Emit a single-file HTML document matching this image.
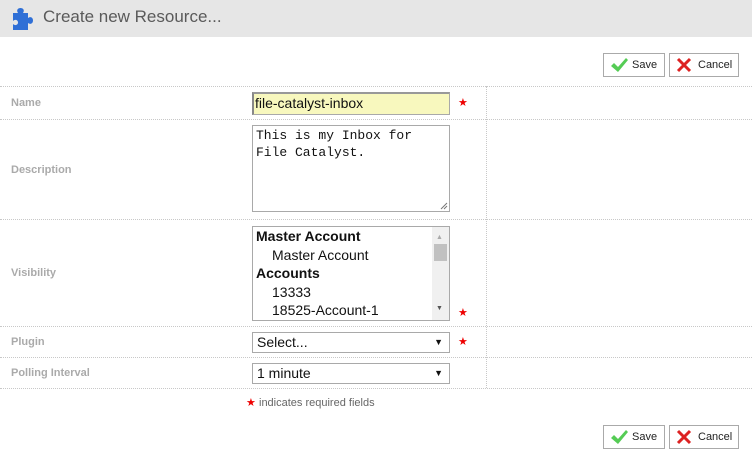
<!DOCTYPE html>
<html><head><style>
*{box-sizing:border-box;margin:0;padding:0}
body{width:752px;height:455px;background:#fff;font-family:"Liberation Sans",Arial,sans-serif;position:relative;overflow:hidden}
.hdr{position:absolute;left:0;top:0;width:752px;height:37px;background:#e6e6e6}
.hdr .t{position:absolute;left:43px;top:7px;font-size:17px;color:#5a5a5a}
.btn{position:absolute;height:24px;border:1px solid #aaa;background:#fff;font-size:11px;color:#222;line-height:22px}
.btn svg{position:absolute;left:6px;top:3px}
.hl{position:absolute;left:0;width:752px;border-top:1px dotted #c8c8c8}
.vl{position:absolute;left:486px;top:86px;height:302px;border-left:1px dotted #c8c8c8}
.lbl{position:absolute;left:11px;font-size:11px;font-weight:bold;color:#aaa}
.star{position:absolute;color:#e00;font-size:11px}
.box{position:absolute;left:252px;width:198px;border:1px solid #a9a9a9;background:#fff}
.sel{height:21px;font-size:14px;line-height:19px;padding-left:4px;color:#111}
.sel:after{content:"▼";position:absolute;right:6px;top:0;font-size:9px}
</style></head><body>
<div class="hdr">
<svg style="position:absolute;left:12px;top:8px" width="21" height="22" viewBox="0 0 21 22"><path d="M1 5h5c-2-3 0-5 2.5-5s4.5 2 2.5 5h5v5c3-2 5 0 5 2.5s-2 4.5-5 2.5v7H1v-6c2 2 5 1 5-1.5S3 11 1 13z" fill="#2f6fd6"/></svg>
<div class="t">Create new Resource...</div></div>

<div class="btn" style="left:603px;top:53px;width:62px"><svg width="18" height="16" viewBox="0 0 18 16"><path d="M1 9l3-3 4 4 8-9 2 2-10 12z" fill="#5c5"/></svg><span style="position:absolute;left:28px">Save</span></div>
<div class="btn" style="left:669px;top:53px;width:70px"><svg width="16" height="16" viewBox="0 0 16 16"><path d="M2 2l12 12M14 2L2 14" stroke="#d22" stroke-width="3"/></svg><span style="position:absolute;left:28px">Cancel</span></div>

<div class="hl" style="top:86px"></div>
<div class="hl" style="top:119px"></div>
<div class="hl" style="top:219px"></div>
<div class="hl" style="top:326px"></div>
<div class="hl" style="top:357px"></div>
<div class="hl" style="top:388px"></div>
<div class="vl"></div>

<div class="lbl" style="top:97px">Name</div>
<div class="lbl" style="top:164px">Description</div>
<div class="lbl" style="top:267px">Visibility</div>
<div class="lbl" style="top:336px">Plugin</div>
<div class="lbl" style="top:367px">Polling Interval</div>

<div class="box" style="top:92px;height:23px;background:#f8f8be;border-left:2px solid #888;border-top:2px solid #999;font-size:14px;line-height:19px;padding-left:1px;color:#111">file-catalyst-inbox</div>
<div class="star" style="left:458px;top:96px">★</div>

<div class="box" style="top:125px;height:87px;font-family:'Liberation Mono',monospace;font-size:13px;line-height:17px;padding:1px 3px;color:#111">This is my Inbox for<br>File Catalyst.<svg style="position:absolute;right:1px;bottom:1px" width="8" height="8"><path d="M7 1L1 7M7 4L4 7" stroke="#777"/></svg></div>

<div class="box" style="top:226px;height:95px;font-size:14px;line-height:18.5px;color:#111;overflow:hidden">
<div style="padding-left:3px;font-weight:bold">Master Account</div>
<div style="padding-left:19px">Master Account</div>
<div style="padding-left:3px;font-weight:bold">Accounts</div>
<div style="padding-left:19px">13333</div>
<div style="padding-left:19px">18525-Account-1</div>
<div style="position:absolute;right:0;top:0;width:17px;height:93px;background:#f0f0f0"><div style="position:absolute;left:2px;top:17px;width:13px;height:17px;background:#c1c1c1"></div><div style="position:absolute;top:2px;left:4px;font-size:7px;color:#aaa">▲</div><div style="position:absolute;bottom:2px;left:4px;font-size:7px;color:#555">▼</div></div>
</div>
<div class="star" style="left:458px;top:306px">★</div>

<div class="box sel" style="top:332px">Select...</div>
<div class="star" style="left:458px;top:335px">★</div>
<div class="box sel" style="top:363px">1 minute</div>

<div class="star" style="left:246px;top:396px">★</div>
<div style="position:absolute;left:259px;top:397px;font-size:11px;color:#666">indicates required fields</div>

<div class="btn" style="left:603px;top:425px;width:62px"><svg width="18" height="16" viewBox="0 0 18 16"><path d="M1 9l3-3 4 4 8-9 2 2-10 12z" fill="#5c5"/></svg><span style="position:absolute;left:28px">Save</span></div>
<div class="btn" style="left:669px;top:425px;width:70px"><svg width="16" height="16" viewBox="0 0 16 16"><path d="M2 2l12 12M14 2L2 14" stroke="#d22" stroke-width="3"/></svg><span style="position:absolute;left:28px">Cancel</span></div>
</body></html>
